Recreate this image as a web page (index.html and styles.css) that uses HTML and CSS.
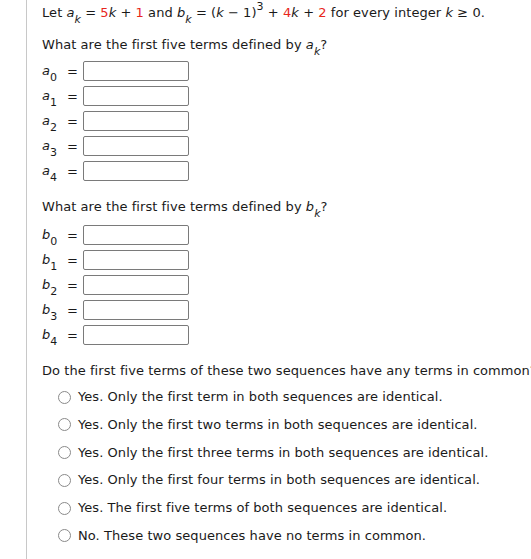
FILE: index.html
```html
<!DOCTYPE html>
<html>
<head>
<meta charset="utf-8">
<link rel="stylesheet" href="styles.css">
</head>
<body>
<div class="panel">
  <p class="intro">Let <span class="v">a</span><sub class="s"><span class="v">k</span></sub> = <span class="r">5</span><span class="v">k</span> + <span class="r">1</span> and <span class="v">b</span><sub class="s"><span class="v">k</span></sub> = (<span class="v">k</span> − 1)<sup>3</sup> + <span class="r">4</span><span class="v">k</span> + <span class="r">2</span> for every integer <span class="v">k</span> ≥ 0.</p>

  <p class="q q1">What are the first five terms defined by <span class="v">a</span><sub class="s"><span class="v">k</span></sub>?</p>
  <div class="rows">
    <div class="row"><span class="lab"><span class="v">a</span><sub>0</sub></span><span class="eq">=</span><span class="box"></span></div>
    <div class="row"><span class="lab"><span class="v">a</span><sub>1</sub></span><span class="eq">=</span><span class="box"></span></div>
    <div class="row"><span class="lab"><span class="v">a</span><sub>2</sub></span><span class="eq">=</span><span class="box"></span></div>
    <div class="row"><span class="lab"><span class="v">a</span><sub>3</sub></span><span class="eq">=</span><span class="box"></span></div>
    <div class="row"><span class="lab"><span class="v">a</span><sub>4</sub></span><span class="eq">=</span><span class="box"></span></div>
  </div>

  <p class="q q2">What are the first five terms defined by <span class="v">b</span><sub class="s"><span class="v">k</span></sub>?</p>
  <div class="rows">
    <div class="row"><span class="lab"><span class="v">b</span><sub>0</sub></span><span class="eq">=</span><span class="box"></span></div>
    <div class="row"><span class="lab"><span class="v">b</span><sub>1</sub></span><span class="eq">=</span><span class="box"></span></div>
    <div class="row"><span class="lab"><span class="v">b</span><sub>2</sub></span><span class="eq">=</span><span class="box"></span></div>
    <div class="row"><span class="lab"><span class="v">b</span><sub>3</sub></span><span class="eq">=</span><span class="box"></span></div>
    <div class="row"><span class="lab"><span class="v">b</span><sub>4</sub></span><span class="eq">=</span><span class="box"></span></div>
  </div>

  <p class="q q3">Do the first five terms of these two sequences have any terms in common?</p>
  <ul class="opts">
    <li><span class="radio"></span>Yes. Only the first term in both sequences are identical.</li>
    <li><span class="radio"></span>Yes. Only the first two terms in both sequences are identical.</li>
    <li><span class="radio"></span>Yes. Only the first three terms in both sequences are identical.</li>
    <li><span class="radio"></span>Yes. Only the first four terms in both sequences are identical.</li>
    <li><span class="radio"></span>Yes. The first five terms of both sequences are identical.</li>
    <li><span class="radio"></span>No. These two sequences have no terms in common.</li>
  </ul>
</div>
</body>
</html>
```

FILE: styles.css
```css
html, body {
  margin: 0;
  padding: 0;
  background: #fff;
}
body {
  font-family: "DejaVu Sans", Verdana, sans-serif;
  font-size: 13px;
  letter-spacing: 0.06px;
  color: #1a1a1a;
  overflow: hidden;
}
.panel {
  margin-left: 26px;
  border-left: 1px solid #c8c8c8;
  padding-left: 15px;
  min-height: 559px;
  box-sizing: border-box;
  white-space: nowrap;
}
p {
  margin: 0;
  line-height: 16px;
}
.intro {
  padding-top: 5px;
}
.v {
  font-style: italic;
}
.r {
  color: #e8261c;
}
sub, sup {
  font-size: 11px;
  line-height: 0;
}
sub {
  vertical-align: -6px;
}
sup {
  vertical-align: 7px;
}
.q1 {
  margin-top: 16px;
}
.q2 {
  margin-top: 18px;
}
.q3 {
  margin-top: 18px;
}
.rows {
  display: flex;
  flex-direction: column;
  gap: 5px;
}
.q1 + .rows {
  margin-top: 8px;
}
.q2 + .rows {
  margin-top: 10px;
}
.row {
  display: flex;
  align-items: center;
  height: 20px;
}
.lab {
  width: 25px;
  line-height: 16px;
}
.eq {
  width: 16px;
}
.box {
  width: 104px;
  height: 18px;
  border: 1px solid #7a7a7a;
  border-radius: 2px;
  background: #fff;
}
.opts {
  list-style: none;
  margin: 0;
  padding: 0 0 0 16px;
  margin-top: 10px;
  display: flex;
  flex-direction: column;
  gap: 11.8px;
}
.opts li {
  display: flex;
  align-items: center;
  line-height: 16px;
}
.radio {
  width: 11px;
  height: 11px;
  border: 1px solid #8a8a8a;
  border-radius: 50%;
  margin-right: 7px;
  background: #fff;
  flex: none;
}
```
